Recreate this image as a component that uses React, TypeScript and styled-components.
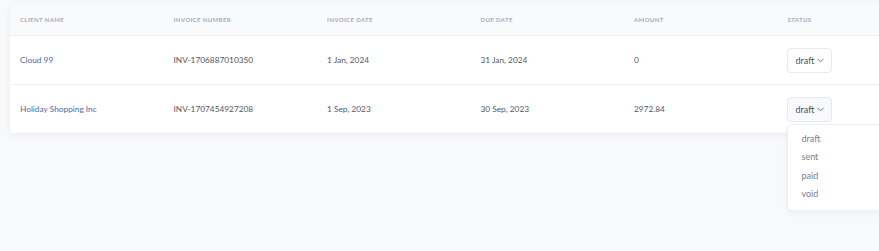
import React, { useState } from 'react'
import styled, { createGlobalStyle } from 'styled-components'

const Global = createGlobalStyle`
  html, body {
    margin: 0;
    padding: 0;
    background: #f8f9fb;
    font-family: Lato, "Open Sans", sans-serif;
    overflow: hidden;
  }
`

const Page = styled.div`
  width: 879px;
  height: 251px;
  padding: 4px 0 0 10px;
  box-sizing: border-box;
  overflow: hidden;
`

const Card = styled.div`
  width: 940px;
  background: #fff;
  border-radius: 4px;
  box-shadow: 0 2px 6px rgba(30, 40, 80, 0.06);
`

const Row = styled.div<{ $head?: boolean }>`
  display: grid;
  grid-template-columns: repeat(6, 153.5px);
  align-items: center;
  height: ${p => (p.$head ? '31px' : '48px')};
  padding-left: 10px;
  background: ${p => (p.$head ? '#f9fafc' : '#fff')};
  border-bottom: 1px solid #eef0f4;
  &:last-child {
    border-bottom: none;
  }
`

const HeadCell = styled.div`
  font-size: 6px;
  font-weight: 700;
  letter-spacing: 0.4px;
  color: #a4abc2;
  text-transform: uppercase;
`

const Cell = styled.div<{ $link?: boolean }>`
  font-size: 8.3px;
  color: ${p => (p.$link ? '#5468a6' : '#535866')};
  position: relative;
`

const StatusButton = styled.button<{ $open?: boolean }>`
  display: inline-flex;
  align-items: center;
  gap: 3px;
  height: 25px;
  margin-left: -1px;
  padding: 0 7px 0 8px;
  border: 1px solid #e6e9ef;
  border-radius: 4px;
  background: ${p => (p.$open ? '#f7f9fc' : '#fff')};
  font-family: inherit;
  font-size: 9px;
  color: #4b5060;
  cursor: pointer;
`

const Menu = styled.ul`
  position: absolute;
  top: 27px;
  left: -1px;
  width: 120px;
  margin: 0;
  padding: 5px 0 6px;
  list-style: none;
  background: #fff;
  border: 1px solid #eceef3;
  border-radius: 4px;
  box-shadow: 0 2px 6px rgba(30, 40, 80, 0.05);
  z-index: 5;
`

const MenuItem = styled.li`
  padding: 0 14px;
  height: 18.5px;
  line-height: 18.5px;
  font-size: 9px;
  color: #7a7f8c;
`

const Chevron = () => (
  <svg width="7" height="5" viewBox="0 0 8 5" fill="none">
    <path d="M1 1l3 3 3-3" stroke="#6b7080" strokeWidth="1.1" strokeLinecap="round" strokeLinejoin="round" />
  </svg>
)

const invoices = [
  { client: 'Cloud 99', number: 'INV-1706887010350', date: '1 Jan, 2024', due: '31 Jan, 2024', amount: '0', status: 'draft' },
  { client: 'Holiday Shopping Inc', number: 'INV-1707454927208', date: '1 Sep, 2023', due: '30 Sep, 2023', amount: '2972.84', status: 'draft' },
]

const statuses = ['draft', 'sent', 'paid', 'void']

export default function App() {
  const [open] = useState(1)
  return (
    <Page>
      <Global />
      <Card>
        <Row $head>
          {['Client Name', 'Invoice Number', 'Invoice Date', 'Due Date', 'Amount', 'Status'].map(h => (
            <HeadCell key={h}>{h}</HeadCell>
          ))}
        </Row>
        {invoices.map((inv, i) => (
          <Row key={inv.number}>
            <Cell $link>{inv.client}</Cell>
            <Cell>{inv.number}</Cell>
            <Cell>{inv.date}</Cell>
            <Cell>{inv.due}</Cell>
            <Cell>{inv.amount}</Cell>
            <Cell>
              <StatusButton $open={open === i}>
                {inv.status} <Chevron />
              </StatusButton>
              {open === i && (
                <Menu>
                  {statuses.map(s => (
                    <MenuItem key={s}>{s}</MenuItem>
                  ))}
                </Menu>
              )}
            </Cell>
          </Row>
        ))}
      </Card>
    </Page>
  )
}
